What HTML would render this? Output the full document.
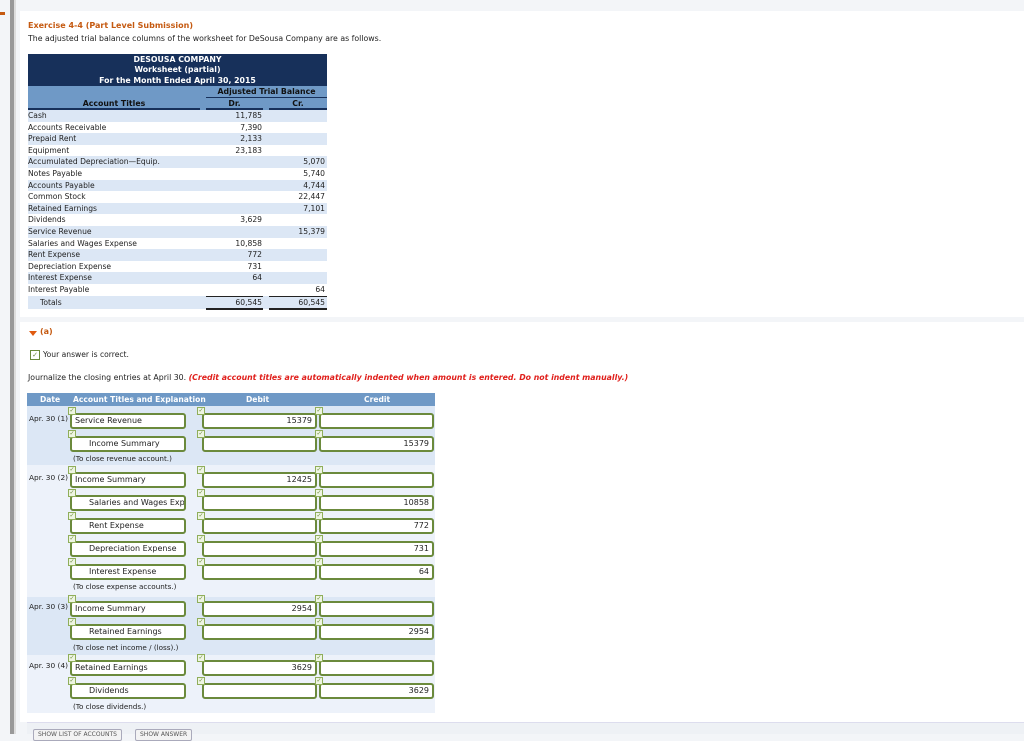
<!DOCTYPE html>
<html><head><style>
*{margin:0;padding:0;box-sizing:border-box}
body{width:1024px;height:734px;background:#f3f5f8;position:relative;overflow:hidden;font-family:"DejaVu Sans","Liberation Sans",sans-serif;font-size:8px;color:#222}
.a{position:absolute;white-space:nowrap}
.panel{position:absolute;background:#fff}
.ws{position:absolute;left:28px;top:54px;width:299px}
.row{position:absolute;left:0;width:299px;height:11.6px;line-height:11.6px;font-size:7.6px}
.row span{position:absolute}
.inp{position:absolute;height:16px;border:2px solid #6b8a3c;border-radius:3px;background:#fff;font-size:8px;line-height:12px;padding:0 3px;white-space:nowrap;overflow:hidden}
.ck{position:absolute;width:8px;height:8px;border:1px solid #8fae5a;background:#eef5e2;font-size:6px;line-height:6px;color:#6b8a3c;text-align:center}
.grp{position:absolute;left:27px;width:408px}
.btn{position:absolute;top:729px;height:12px;border:1px solid #aab;border-radius:2px;background:#f3f3f3;font-size:6px;line-height:10px;padding:0 4px;color:#555}
</style></head><body>
<div class="a" style="left:0;top:12px;width:5px;height:3px;background:#c55a11"></div>
<div class="a" style="left:10px;top:0;width:4px;height:734px;background:#999"></div>
<div class="a" style="left:14px;top:0;width:2px;height:734px;background:#ddd"></div>
<div class="panel" style="left:20px;top:11px;width:1004px;height:306px"></div>
<div class="panel" style="left:20px;top:322px;width:1004px;height:400px"></div>

<div class="a" style="left:28px;top:21px;font-weight:bold;color:#c55a11;font-size:8px">Exercise 4-4 (Part Level Submission)</div>
<div class="a" style="left:28px;top:34px;font-size:7.8px">The adjusted trial balance columns of the worksheet for DeSousa Company are as follows.</div>

<div class="ws">
<div class="a" style="left:0;top:0;width:299px;height:32px;background:#17305a;color:#fff;font-weight:bold;text-align:center;font-size:7.8px;line-height:10.3px;padding-top:1px">DESOUSA COMPANY<br>Worksheet (partial)<br>For the Month Ended April 30, 2015</div>
<div class="a" style="left:0;top:32px;width:299px;height:24px;background:#6f99c6"></div>
<div class="a" style="left:178px;top:33px;width:121px;text-align:center;font-weight:bold;font-size:7.8px;color:#111">Adjusted Trial Balance</div>
<div class="a" style="left:178px;top:43px;width:121px;height:1px;background:#17305a"></div>
<div class="a" style="left:0;top:45px;width:172px;text-align:center;font-weight:bold;font-size:7.8px;color:#111">Account Titles</div>
<div class="a" style="left:178px;top:45px;width:57px;text-align:center;font-weight:bold;font-size:7.8px;color:#111">Dr.</div>
<div class="a" style="left:241px;top:45px;width:58px;text-align:center;font-weight:bold;font-size:7.8px;color:#111">Cr.</div>
<div class="a" style="left:0;top:54px;width:172px;height:2px;background:#17305a"></div>
<div class="a" style="left:178px;top:54px;width:57px;height:2px;background:#17305a"></div>
<div class="a" style="left:241px;top:54px;width:58px;height:2px;background:#17305a"></div>
</div>

<div class="ws" style="top:110px">
<div class="row" style="top:0;background:#dce7f5"><span style="left:0">Cash</span><span style="right:65px">11,785</span></div>
<div class="row" style="top:11.6px"><span style="left:0">Accounts Receivable</span><span style="right:65px">7,390</span></div>
<div class="row" style="top:23.2px;background:#dce7f5"><span style="left:0">Prepaid Rent</span><span style="right:65px">2,133</span></div>
<div class="row" style="top:34.8px"><span style="left:0">Equipment</span><span style="right:65px">23,183</span></div>
<div class="row" style="top:46.4px;background:#dce7f5"><span style="left:0">Accumulated Depreciation—Equip.</span><span style="right:2px">5,070</span></div>
<div class="row" style="top:58px"><span style="left:0">Notes Payable</span><span style="right:2px">5,740</span></div>
<div class="row" style="top:69.6px;background:#dce7f5"><span style="left:0">Accounts Payable</span><span style="right:2px">4,744</span></div>
<div class="row" style="top:81.2px"><span style="left:0">Common Stock</span><span style="right:2px">22,447</span></div>
<div class="row" style="top:92.8px;background:#dce7f5"><span style="left:0">Retained Earnings</span><span style="right:2px">7,101</span></div>
<div class="row" style="top:104.4px"><span style="left:0">Dividends</span><span style="right:65px">3,629</span></div>
<div class="row" style="top:116px;background:#dce7f5"><span style="left:0">Service Revenue</span><span style="right:2px">15,379</span></div>
<div class="row" style="top:127.6px"><span style="left:0">Salaries and Wages Expense</span><span style="right:65px">10,858</span></div>
<div class="row" style="top:139.2px;background:#dce7f5"><span style="left:0">Rent Expense</span><span style="right:65px">772</span></div>
<div class="row" style="top:150.8px"><span style="left:0">Depreciation Expense</span><span style="right:65px">731</span></div>
<div class="row" style="top:162.4px;background:#dce7f5"><span style="left:0">Interest Expense</span><span style="right:65px">64</span></div>
<div class="row" style="top:174px"><span style="left:0">Interest Payable</span><span style="right:2px">64</span></div>
<div class="row" style="top:185.6px;height:13px;line-height:13px;background:#dce7f5"><span style="left:12px">Totals</span><span style="right:65px">60,545</span><span style="right:2px">60,545</span></div>
<div class="a" style="left:178px;top:186px;width:57px;height:1px;background:#222"></div>
<div class="a" style="left:241px;top:186px;width:58px;height:1px;background:#222"></div>
<div class="a" style="left:178px;top:198px;width:57px;height:2px;background:#222"></div>
<div class="a" style="left:241px;top:198px;width:58px;height:2px;background:#222"></div>
</div>

<div class="a" style="left:29px;top:331px;width:0;height:0;border-left:4px solid transparent;border-right:4px solid transparent;border-top:5px solid #e05a10"></div>
<div class="a" style="left:40px;top:327px;color:#c55a11;font-weight:bold;font-size:8px">(a)</div>
<div class="a" style="left:30px;top:350px;width:10px;height:10px;border:1px solid #6b8a3c;color:#6b8a3c;font-size:7px;line-height:8px;text-align:center">✓</div>
<div class="a" style="left:43px;top:350px;font-size:7.6px">Your answer is correct.</div>
<div class="a" style="left:28px;top:373px;font-size:7.8px">Journalize the closing entries at April 30. <span style="color:#e0201c;font-weight:bold;font-style:italic">(Credit account titles are automatically indented when amount is entered. Do not indent manually.)</span></div>

<div class="grp" style="top:393px;height:13px;background:#6f99c6;color:#fff;font-weight:bold;font-size:7.6px;line-height:13px">
<span class="a" style="left:13px">Date</span><span class="a" style="left:46px">Account Titles and Explanation</span><span class="a" style="left:219px">Debit</span><span class="a" style="left:337px">Credit</span></div>
<div class="grp" style="top:406px;height:59px;background:#dce7f5"></div>
<div class="grp" style="top:465px;height:132px;background:#edf2fa"></div>
<div class="grp" style="top:597px;height:58px;background:#dce7f5"></div>
<div class="grp" style="top:655px;height:58px;background:#edf2fa"></div>

<div id="j"></div>
<script>
var rows=[[413,"Apr. 30 (1)","Service Revenue","15379","",0],[436,"","Income Summary","","15379",1],
[472,"Apr. 30 (2)","Income Summary","12425","",0],[495,"","Salaries and Wages Exp","","10858",1],[518,"","Rent Expense","","772",1],[541,"","Depreciation Expense","","731",1],[564,"","Interest Expense","","64",1],
[601,"Apr. 30 (3)","Income Summary","2954","",0],[624,"","Retained Earnings","","2954",1],
[660,"Apr. 30 (4)","Retained Earnings","3629","",0],[683,"","Dividends","","3629",1]];
var h="";
rows.forEach(function(r){var t=r[0];
if(r[1])h+='<div class="a" style="left:29px;top:'+(t+1)+'px;font-size:7.4px">'+r[1]+'</div>';
h+='<div class="inp" style="left:70px;top:'+t+'px;width:116px;padding-left:'+(r[5]?17:3)+'px">'+r[2]+'</div>';
h+='<div class="inp" style="left:202px;top:'+t+'px;width:115px;text-align:right">'+r[3]+'</div>';
h+='<div class="inp" style="left:319px;top:'+t+'px;width:115px;text-align:right">'+r[4]+'</div>';
[68,197,315].forEach(function(x){h+='<div class="ck" style="left:'+x+'px;top:'+(t-6)+'px">✓</div>';});
});
[[454,"(To close revenue account.)"],[582,"(To close expense accounts.)"],[643,"(To close net income / (loss).)"],[702,"(To close dividends.)"]].forEach(function(e){
h+='<div class="a" style="left:73px;top:'+e[0]+'px;font-size:7.2px">'+e[1]+'</div>';});
document.getElementById("j").innerHTML=h;
</script>
<div class="a" style="left:27px;top:722px;width:997px;height:12px;background:#eef1f5;border-top:1px solid #dde"></div>
<div class="btn" style="left:33px">SHOW LIST OF ACCOUNTS</div>
<div class="btn" style="left:135px">SHOW ANSWER</div>
</body></html>
